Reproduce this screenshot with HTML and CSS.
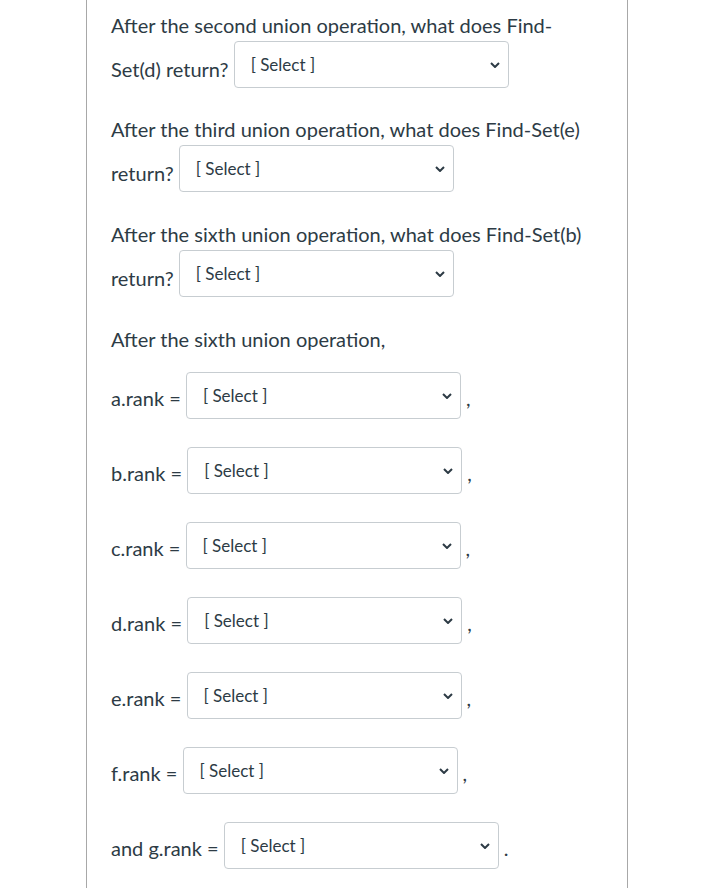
FILE: index.html
```html
<!DOCTYPE html>
<html>
<head>
<meta charset="utf-8">
<link rel="stylesheet" href="styles.css">
</head>
<body>
<div class="question">
  <p class="q">After the second union operation, what does Find-Set(d) return? <span class="sel"><span class="sel-text">[ Select ]</span><svg class="chev" viewBox="0 0 10 6" width="10" height="6"><path d="M1 1 L5 5 L9 1" fill="none" stroke="#2d3b45" stroke-width="2"/></svg></span></p>
  <p class="q">After the third union operation, what does Find-Set(e) return? <span class="sel"><span class="sel-text">[ Select ]</span><svg class="chev" viewBox="0 0 10 6" width="10" height="6"><path d="M1 1 L5 5 L9 1" fill="none" stroke="#2d3b45" stroke-width="2"/></svg></span></p>
  <p class="q q3">After the sixth union operation, what does Find-Set(b) return? <span class="sel"><span class="sel-text">[ Select ]</span><svg class="chev" viewBox="0 0 10 6" width="10" height="6"><path d="M1 1 L5 5 L9 1" fill="none" stroke="#2d3b45" stroke-width="2"/></svg></span></p>
  <p class="q intro">After the sixth union operation,</p>
  <p class="rank">a.rank = <span class="sel"><span class="sel-text">[ Select ]</span><svg class="chev" viewBox="0 0 10 6" width="10" height="6"><path d="M1 1 L5 5 L9 1" fill="none" stroke="#2d3b45" stroke-width="2"/></svg></span>,</p>
  <p class="rank">b.rank = <span class="sel"><span class="sel-text">[ Select ]</span><svg class="chev" viewBox="0 0 10 6" width="10" height="6"><path d="M1 1 L5 5 L9 1" fill="none" stroke="#2d3b45" stroke-width="2"/></svg></span>,</p>
  <p class="rank">c.rank = <span class="sel"><span class="sel-text">[ Select ]</span><svg class="chev" viewBox="0 0 10 6" width="10" height="6"><path d="M1 1 L5 5 L9 1" fill="none" stroke="#2d3b45" stroke-width="2"/></svg></span>,</p>
  <p class="rank">d.rank = <span class="sel"><span class="sel-text">[ Select ]</span><svg class="chev" viewBox="0 0 10 6" width="10" height="6"><path d="M1 1 L5 5 L9 1" fill="none" stroke="#2d3b45" stroke-width="2"/></svg></span>,</p>
  <p class="rank">e.rank = <span class="sel"><span class="sel-text">[ Select ]</span><svg class="chev" viewBox="0 0 10 6" width="10" height="6"><path d="M1 1 L5 5 L9 1" fill="none" stroke="#2d3b45" stroke-width="2"/></svg></span>,</p>
  <p class="rank">f.rank = <span class="sel"><span class="sel-text">[ Select ]</span><svg class="chev" viewBox="0 0 10 6" width="10" height="6"><path d="M1 1 L5 5 L9 1" fill="none" stroke="#2d3b45" stroke-width="2"/></svg></span>,</p>
  <p class="rank">and g.rank = <span class="sel"><span class="sel-text">[ Select ]</span><svg class="chev" viewBox="0 0 10 6" width="10" height="6"><path d="M1 1 L5 5 L9 1" fill="none" stroke="#2d3b45" stroke-width="2"/></svg></span>.</p>
</div>
</body>
</html>
```
FILE: styles.css
```css
html, body {
  margin: 0;
  padding: 0;
  background: #ffffff;
}
body {
  font-family: Lato, "Open Sans", sans-serif;
  color: #2d3b45;
  font-size: 20px;
}
.question {
  margin-left: 86px;
  width: 484px;
  padding: 0 32px 20px 24px;
  border-left: 1px solid #a8a8a8;
  border-right: 1px solid #a8a8a8;
  min-height: 888px;
  box-sizing: content-box;
}
.q {
  margin: 0 0 14px 0;
  line-height: 44px;
  padding-top: 3px;
}
.q:first-child {
  margin-bottom: 13px;
}
.q .sel {
  margin-top: -7px;
  vertical-align: 6px;
}
.intro {
  margin-bottom: 0;
}
.rank {
  margin: 0;
  line-height: 75px;
}
.sel {
  display: inline-flex;
  align-items: center;
  justify-content: space-between;
  box-sizing: border-box;
  width: 275px;
  height: 47px;
  padding: 0 8px 0 16px;
  border: 1px solid #c7cdd1;
  border-radius: 4px;
  vertical-align: 4px;
  line-height: 1;
  margin: 0 5px 0 0;
  background: #fff;
}
.sel-text {
  font-size: 17px;
}
.chev {
  display: block;
}
```
